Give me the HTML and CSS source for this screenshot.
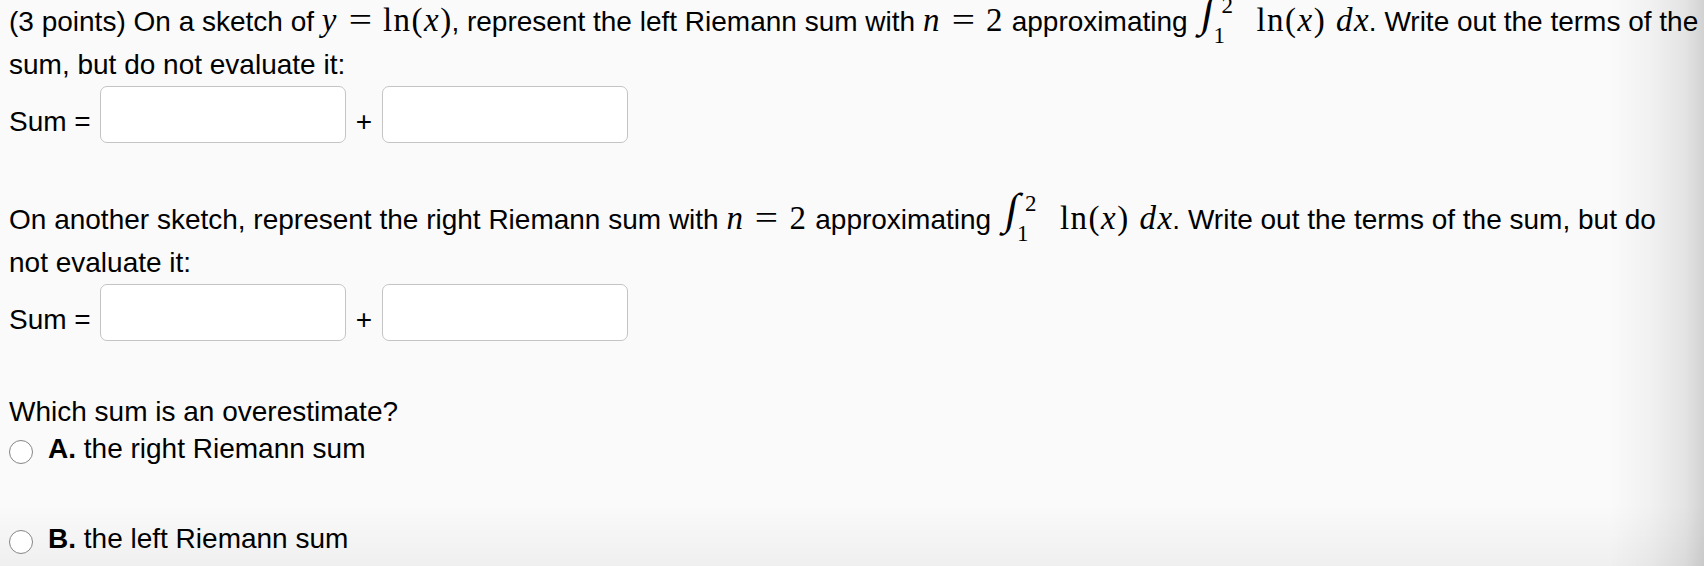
FILE: index.html
```html
<!DOCTYPE html>
<html>
<head>
<meta charset="utf-8">
<link rel="stylesheet" href="styles.css">
</head>
<body>
<div class="problem">
  <p class="para">
    <span class="line">(3 points) On a sketch of <span class="m"><span class="mi">y</span><span class="rel">=</span><span class="fn0">ln(<span class="mi">x</span>)</span></span>, represent the left Riemann sum with <span class="m"><span class="mi">n</span><span class="rel">=</span>2</span> approximating <span class="m"><span class="isym">∫</span><span class="lims"><span class="sup">2</span><span class="sub">1</span></span><span class="fn">ln(<span class="mi">x</span>)</span><span class="mi dx">dx</span></span>. Write out the terms of the</span>
    <span class="line">sum, but do not evaluate it:</span>
  </p>
  <div class="sumrow">
    <span class="lbl">Sum =</span>
    <input class="ans" type="text">
    <span class="plus">+</span>
    <input class="ans" type="text">
  </div>

  <p class="para p2">
    <span class="line">On another sketch, represent the right Riemann sum with <span class="m"><span class="mi">n</span><span class="rel">=</span>2</span> approximating <span class="m"><span class="isym">∫</span><span class="lims"><span class="sup">2</span><span class="sub">1</span></span><span class="fn">ln(<span class="mi">x</span>)</span><span class="mi dx">dx</span></span>. Write out the terms of the sum, but do</span>
    <span class="line">not evaluate it:</span>
  </p>
  <div class="sumrow">
    <span class="lbl">Sum =</span>
    <input class="ans" type="text">
    <span class="plus">+</span>
    <input class="ans" type="text">
  </div>

  <p class="which">Which sum is an overestimate?</p>
  <label class="opt"><span class="radio"></span><span class="otext"><b>A.</b> the right Riemann sum</span></label>
  <label class="opt optb"><span class="radio"></span><span class="otext"><b>B.</b> the left Riemann sum</span></label>
</div>
</body>
</html>
```
FILE: styles.css
```css
html {
  height: 100%;
  background:
    linear-gradient(to right, rgba(0,0,0,0) 1610px, rgba(0,0,0,0.035) 1650px, rgba(0,0,0,0.09) 1685px, rgba(0,0,0,0.16) 1704px),
    linear-gradient(to bottom, rgba(0,0,0,0) 505px, rgba(0,0,0,0.045) 566px),
    #fafafa;
}
body {
  margin: 0;
  height: 100%;
  overflow: hidden;
  font-family: "Liberation Sans", Arial, Helvetica, sans-serif;
  font-size: 28px;
  line-height: 43px;
  color: #000;
}
.problem {
  padding-left: 9px;
}
.para {
  margin: 0;
}
.line {
  display: block;
  white-space: nowrap;
  height: 43px;
}
.p2 {
  margin-top: 55px;
}
.m {
  font-family: "Liberation Serif", "Times New Roman", serif;
  font-size: 33px;
  letter-spacing: 0.045em;
  line-height: 0;
}
.mi {
  font-style: italic;
}
.rel {
  display: inline-block;
  width: 19px;
  letter-spacing: 0;
  margin: 0 13px 0 13px;
  transform: scaleX(1.25);
}
.fn0 {
  margin-right: -0.04em;
}
.isym {
  display: inline-block;
  width: 13px;
  margin-left: 7px;
  font-size: 44px;
  letter-spacing: 0;
  transform: translateY(-5px) skewX(-10deg);
}
.lims {
  display: inline-block;
  vertical-align: -12px;
  margin-top: -16px;
  margin-bottom: -8px;
  width: 20px;
  font-size: 23px;
  line-height: 21px;
  letter-spacing: 0;
}
.sup {
  display: block;
  padding-left: 6px;
}
.sub {
  display: block;
  margin-top: 9px;
  margin-left: -2px;
}
.fn {
  margin-left: 21px;
  margin-right: 0.3em;
}
.dx {
  margin-right: -0.04em;
}
.sumrow {
  display: flex;
  align-items: flex-start;
  height: 57px;
}
.lbl {
  margin-top: 14px;
  margin-right: 9px;
}
.plus {
  margin: 14px 10px 0 10px;
}
.ans {
  box-sizing: border-box;
  width: 246px;
  height: 57px;
  margin: 0;
  border: 1.5px solid #c4c4c4;
  border-radius: 7px;
  background: #fff;
  outline: none;
  padding: 0 8px;
  font: inherit;
}
.which {
  margin: 52px 0 0 0;
  line-height: 37px;
}
.opt {
  display: flex;
  align-items: center;
  height: 37px;
  line-height: 37px;
}
.optb {
  margin-top: 53px;
}
.radio {
  box-sizing: border-box;
  width: 24px;
  height: 24px;
  border: 1.5px solid #858585;
  border-radius: 50%;
  background: #fff;
  margin-top: 6px;
  margin-right: 15px;
  flex: none;
}
.otext b {
  font-weight: bold;
}
```
